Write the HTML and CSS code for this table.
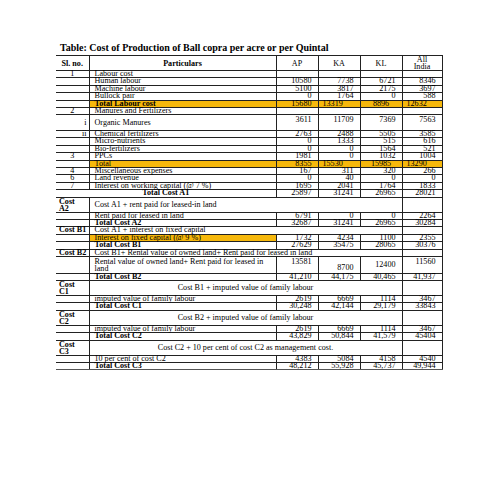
FILE: index.html
```html
<!DOCTYPE html>
<html>
<head>
<meta charset="utf-8">
<link rel="stylesheet" href="styles.css">
</head>
<body>
<div class="page">
  <div class="title">Table: Cost of Production of Ball copra per acre or per Quintal</div>
  <table class="cost">
    <colgroup>
      <col class="c-sl"><col class="c-part"><col class="c-n"><col class="c-n"><col class="c-n"><col class="c-ai">
    </colgroup>
    <tr class="head">
      <td class="b ctr">Sl. no.</td>
      <td class="b ctr">Particulars</td>
      <td class="ctr">AP</td>
      <td class="ctr">KA</td>
      <td class="ctr">KL</td>
      <td class="ctr">All<br>India</td>
    </tr>
    <tr><td class="ctr">1</td><td class="p">Labour cost</td><td></td><td></td><td></td><td></td></tr>
    <tr><td></td><td class="p">Human labour</td><td class="n">10580</td><td class="n">7738</td><td class="n">6721</td><td class="n">8346</td></tr>
    <tr><td></td><td class="p">Machine labour</td><td class="n">5100</td><td class="n">3817</td><td class="n">2175</td><td class="n">3697</td></tr>
    <tr><td></td><td class="p">Bullock pair</td><td class="n">0</td><td class="n">1764</td><td class="n">0</td><td class="n">588</td></tr>
    <tr><td></td><td class="p b hl">Total Labour cost</td><td class="n hl">15680</td><td class="l hl">13319</td><td class="ctr hl">8896</td><td class="l hl">12632</td></tr>
    <tr><td class="ctr">2</td><td class="p">Manures and Fertilizers</td><td></td><td></td><td></td><td></td></tr>
    <tr class="dbl"><td class="r">i</td><td class="p">Organic Manures</td><td class="n top">3611</td><td class="n top">11709</td><td class="n top">7369</td><td class="n top">7563</td></tr>
    <tr><td class="r">ii</td><td class="p">Chemical fertilizers</td><td class="n">2763</td><td class="n">2488</td><td class="n">5505</td><td class="n">3585</td></tr>
    <tr><td></td><td class="p">Micro-nutrients</td><td class="n">0</td><td class="n">1333</td><td class="n">515</td><td class="n">616</td></tr>
    <tr><td></td><td class="p">Bio-fertilizers</td><td class="n">0</td><td class="n">0</td><td class="n">1564</td><td class="n">521</td></tr>
    <tr><td class="ctr">3</td><td class="p">PPCs</td><td class="n">1981</td><td class="n">0</td><td class="n">1032</td><td class="n">1004</td></tr>
    <tr><td></td><td class="p hl">Total</td><td class="n hl">8355</td><td class="l hl">15530</td><td class="ctr hl">15985</td><td class="l hl">13290</td></tr>
    <tr><td class="ctr">4</td><td class="p">Miscellaneous expenses</td><td class="n">167</td><td class="n">311</td><td class="n">320</td><td class="n">266</td></tr>
    <tr><td class="ctr">6</td><td class="p">Land revenue</td><td class="n">0</td><td class="n">40</td><td class="n">0</td><td class="n">0</td></tr>
    <tr><td class="ctr">7</td><td class="p">Interest on working capital (@ 7 %)</td><td class="n">1695</td><td class="n">2041</td><td class="n">1764</td><td class="n">1833</td></tr>
    <tr><td colspan="2" class="b ctr">Total Cost A1</td><td class="n">25897</td><td class="n">31241</td><td class="n">26965</td><td class="n">28021</td></tr>
    <tr class="dbl"><td class="b sl">Cost<br>A2</td><td colspan="4" class="p">Cost A1 + rent paid for leased-in land</td><td></td></tr>
    <tr><td></td><td class="p">Rent paid for leased in land</td><td class="n">6791</td><td class="n">0</td><td class="n">0</td><td class="n">2264</td></tr>
    <tr><td></td><td class="p b">Total Cost A2</td><td class="n">32687</td><td class="n">31241</td><td class="n">26965</td><td class="n">30284</td></tr>
    <tr><td class="b sl">Cost B1</td><td colspan="4" class="p">Cost A1 + interest on fixed capital</td><td></td></tr>
    <tr><td></td><td class="p hl">Interest on fixed capital (@ 9 %)</td><td class="n">1732</td><td class="n">4234</td><td class="n">1100</td><td class="n">2355</td></tr>
    <tr><td></td><td class="p b">Total Cost B1</td><td class="n">27629</td><td class="n">35475</td><td class="n">28065</td><td class="n">30376</td></tr>
    <tr><td class="b sl">Cost B2</td><td colspan="4" class="p">Cost B1+ Rental value of owned land+ Rent paid for leased in land</td><td></td></tr>
    <tr class="dbl"><td></td><td class="p two">Rental value of owned land+ Rent paid for leased in land</td><td class="n top">13581</td><td class="n low">8700</td><td class="n mid">12400</td><td class="n top">11560</td></tr>
    <tr><td></td><td class="p b">Total Cost B2</td><td class="n">41,210</td><td class="n">44,175</td><td class="n">40,465</td><td class="n">41,937</td></tr>
    <tr class="dbl"><td class="b sl">Cost<br>C1</td><td colspan="4" class="ctr">Cost B1 + imputed value of family labour</td><td></td></tr>
    <tr><td></td><td class="p">imputed value of family labour</td><td class="n">2619</td><td class="n">6669</td><td class="n">1114</td><td class="n">3467</td></tr>
    <tr><td></td><td class="p b">Total Cost C1</td><td class="n">30,248</td><td class="n">42,144</td><td class="n">29,179</td><td class="n">33843</td></tr>
    <tr class="dbl"><td class="b sl">Cost<br>C2</td><td colspan="4" class="ctr">Cost B2 + imputed value of family labour</td><td></td></tr>
    <tr><td></td><td class="p">imputed value of family labour</td><td class="n">2619</td><td class="n">6669</td><td class="n">1114</td><td class="n">3467</td></tr>
    <tr><td></td><td class="p b">Total Cost C2</td><td class="n">43,829</td><td class="n">50,844</td><td class="n">41,579</td><td class="n">45404</td></tr>
    <tr class="dbl"><td class="b sl">Cost<br>C3</td><td colspan="4" class="ctr">Cost C2 + 10 per cent of cost C2 as management cost.</td><td></td></tr>
    <tr><td></td><td class="p">10 per cent of cost C2</td><td class="n">4383</td><td class="n">5084</td><td class="n">4158</td><td class="n">4540</td></tr>
    <tr class="last"><td></td><td class="p b">Total Cost C3</td><td class="n">48,212</td><td class="n">55,928</td><td class="n">45,737</td><td class="n">49,944</td></tr>
  </table>
</div>
</body>
</html>
```

FILE: styles.css
```css
html, body {
  margin: 0;
  padding: 0;
  background: #ffffff;
}

body {
  font-family: "Liberation Serif", "Times New Roman", serif;
  color: #000;
}

.page {
  padding: 42px 0 0 56px;
}

.title {
  font-weight: bold;
  font-size: 10px;
  line-height: 11px;
  padding-left: 4px;
  margin-bottom: 2px;
  white-space: nowrap;
}

.cost {
  border-collapse: collapse;
  table-layout: fixed;
  width: 386px;
  font-size: 8.1px;
}

.c-sl { width: 33px; }
.c-part { width: 187px; }
.c-n { width: 42px; }
.c-ai { width: 40px; }

.cost td {
  border: 1px solid #222;
  padding: 0 0 1px 0;
  height: 5.4px;
  line-height: 5.4px;
  vertical-align: middle;
  white-space: nowrap;
}

.cost td:first-child {
  border-left: none;
}

.cost tr.head td {
  height: 12.5px;
  padding-bottom: 0;
  line-height: 7px;
}

.cost tr.dbl td {
  height: 13.5px;
  padding-bottom: 0;
  line-height: 7px;
}

.cost tr.last td {
  border-bottom: 1.5px solid #555;
}

.b { font-weight: bold; }
.ctr { text-align: center; }
.r { text-align: right; padding-right: 2px !important; }
.l { text-align: left; padding-left: 4px !important; }
.p { text-align: left; padding-left: 5px !important; }
.sl { text-align: left; padding-left: 3px !important; }
.n { text-align: right; padding-right: 6px !important; }
.hl { background: #f6b80c; }

.cost td.top { vertical-align: top; padding-top: 1px !important; }
.cost td.mid { vertical-align: middle; }
.cost td.low { vertical-align: bottom; padding-bottom: 2px !important; }
.cost td.two { white-space: normal; }
```
